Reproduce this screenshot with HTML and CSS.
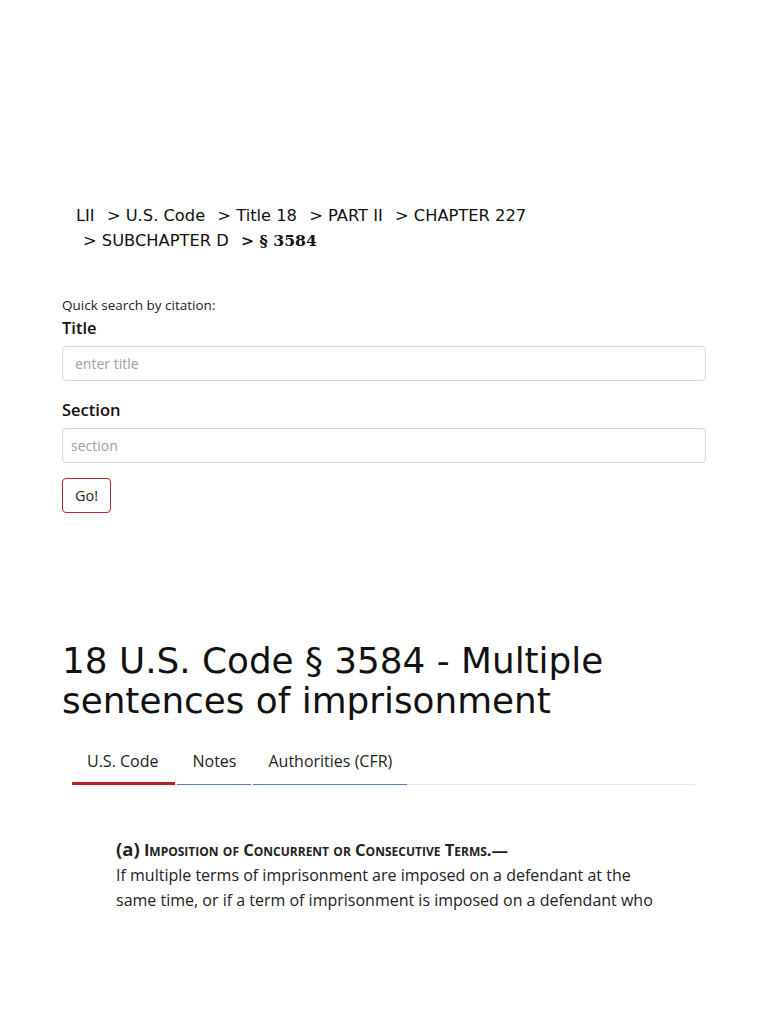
FILE: index.html
```html
<!DOCTYPE html>
<html lang="en">
<head>
<meta charset="utf-8">
<title>18 U.S. Code § 3584 - Multiple sentences of imprisonment</title>
<link rel="stylesheet" href="styles.css">
</head>
<body>
<div class="page">
  <nav class="crumbs">
    <ol class="crumb-list">
      <li class="crumb first">LII</li>
      <li class="crumb">U.S. Code</li>
      <li class="crumb">Title 18</li>
      <li class="crumb">PART II</li>
      <li class="crumb">CHAPTER 227</li>
      <li class="crumb">SUBCHAPTER D</li>
      <li class="crumb current">§ 3584</li>
    </ol>
  </nav>

  <form class="quick">
    <div class="quick-label">Quick search by citation:</div>
    <label class="field-label">Title</label>
    <input class="field" type="text" placeholder="enter title">
    <label class="field-label">Section</label>
    <input class="field field-section" type="text" placeholder="section">
    <button class="go" type="button">Go!</button>
  </form>

  <h1 class="title">18 U.S. Code § 3584 - Multiple sentences of imprisonment</h1>

  <ul class="tabs">
    <li class="tab active">U.S. Code</li>
    <li class="tab">Notes</li>
    <li class="tab">Authorities (CFR)</li>
  </ul>

  <div class="text">
    <p class="para"><span class="enum">(a)</span> <span class="heading">Imposition of Concurrent or Consecutive Terms.—</span><br>If multiple terms of imprisonment are imposed on a defendant at the same time, or if a term of imprisonment is imposed on a defendant who</p>
  </div>
</div>
</body>
</html>
```
FILE: styles.css
```css
html, body {
  margin: 0;
  padding: 0;
  background: #fff;
  color: #1a1a1a;
}
body {
  font-family: "Open Sans", "Noto Sans", sans-serif;
}
.page {
  padding: 203px 63px 0 62px;
}
.crumbs {
  font-family: "DejaVu Sans", sans-serif;
  font-size: 16.3px;
  line-height: 25px;
  color: #111;
}
.crumb-list {
  list-style: none;
  margin: 0;
  padding: 0 0 0 14px;
  width: 520px;
}
.crumb {
  display: inline-block;
  white-space: nowrap;
  padding-left: 7px;
}
.crumb::before {
  content: ">\00a0";
}
.crumb.first {
  padding-left: 0;
}
.crumb.first::before {
  content: "";
}
.crumb.current {
  font-family: "DejaVu Serif", serif;
  font-weight: bold;
  font-size: 15.7px;
}
.quick {
  margin-top: 42px;
  display: flex;
  flex-direction: column;
  align-items: flex-start;
}
.quick-label {
  font-size: 13.5px;
  line-height: 20px;
  color: #222;
}
.field-label {
  font-size: 16.5px;
  font-weight: 600;
  line-height: 24px;
  margin-top: 1px;
  margin-bottom: 6px;
  color: #111;
}
.field {
  box-sizing: border-box;
  width: 644px;
  height: 35px;
  border: 1px solid #d6d6d6;
  border-radius: 4px;
  padding: 0 12px;
  font-family: "Open Sans", sans-serif;
  font-size: 14px;
  color: #333;
  margin-bottom: 17px;
}
.field + .field-label {
  margin-top: 0;
}
.field-section {
  padding-left: 8px;
}
.field::placeholder {
  color: #a0a0a0;
}
.go {
  box-sizing: border-box;
  width: 49px;
  height: 35px;
  background: #fff;
  border: 1px solid #b3272d;
  border-radius: 4px;
  font-family: "Open Sans", sans-serif;
  font-size: 14.5px;
  color: #222;
  padding: 0;
  margin-top: -2px;
}
.title {
  font-family: "DejaVu Sans", sans-serif;
  font-weight: normal;
  font-size: 35.8px;
  line-height: 40px;
  margin: 128px 0 0 0;
  color: #111;
  width: 600px;
}
.tabs {
  list-style: none;
  margin: 19px 10px 0 10px;
  padding: 0;
  display: flex;
  gap: 2px;
  border-bottom: 1px solid #e8e8e8;
}
.tab {
  font-size: 16px;
  line-height: 22px;
  padding: 10px 15px 12px 15px;
  border-bottom: 1px solid #5b7fd0;
  margin-bottom: -1px;
  color: #222;
}
.tab.active {
  padding-right: 17px;
  border-bottom: 3px solid #b51f24;
  padding-bottom: 10px;
}
.text {
  padding: 51px 45px 0 54px;
}
.para {
  margin: 0;
  font-size: 16px;
  line-height: 25px;
  color: #222;
}
.enum {
  font-weight: 700;
  font-size: 18.5px;
}
.heading {
  font-weight: 700;
  font-variant: small-caps;
  font-size: 16.5px;
}
```
